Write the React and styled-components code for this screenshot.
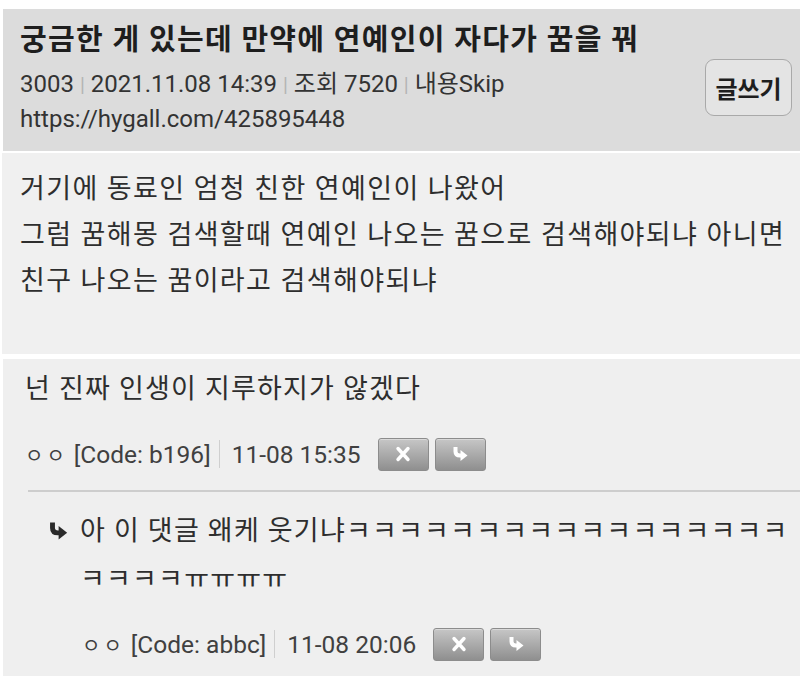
import styled, { createGlobalStyle } from "styled-components";

const Global = createGlobalStyle`
  body {
    margin: 0;
    background: #fff;
    font-family: "Roboto", "Noto Sans CJK KR", sans-serif;
  }
`;

function ReplyArrow({ color = "#fff", size = 18 }) {
  return (
    <svg width={size} height={size} viewBox="0 0 18 18">
      <path d="M4.5 2 L4.5 6.5 Q4.5 10.5 9 10.5 L10.5 10.5" stroke={color} strokeWidth="4" fill="none" />
      <path d="M9.5 5 L16.5 10.5 L9.5 16 Z" fill={color} />
    </svg>
  );
}

function CloseIcon() {
  return (
    <svg width="18" height="16" viewBox="0 0 18 16">
      <path d="M4 2.5 L14 13.5 M14 2.5 L4 13.5" stroke="#fff" strokeWidth="3.4" strokeLinecap="round" />
    </svg>
  );
}

function Actions() {
  return (
    <Btns>
      <IconBtn><CloseIcon /></IconBtn>
      <IconBtn><ReplyArrow /></IconBtn>
    </Btns>
  );
}

function Meta({ code, time }) {
  return (
    <MetaRow>
      <Nick>ㅇㅇ</Nick>
      <span>[Code: {code}]</span>
      <Bar />
      <span>{time}</span>
      <Actions />
    </MetaRow>
  );
}

export default function App() {
  return (
    <>
      <Global />
      <Page>
        <Header>
          <HeadInfo>
            <Title>궁금한 게 있는데 만약에 연예인이 자다가 꿈을 꿔</Title>
            <Info>
              3003 <Sep>|</Sep> 2021.11.08 14:39 <Sep>|</Sep> 조회 7520 <Sep>|</Sep> 내용Skip
            </Info>
            <Info>https://hygall.com/425895448</Info>
          </HeadInfo>
          <WriteBtn>글쓰기</WriteBtn>
        </Header>

        <Body>
          <p>거기에 동료인 엄청 친한 연예인이 나왔어</p>
          <p>그럼 꿈해몽 검색할때 연예인 나오는 꿈으로 검색해야되냐 아니면</p>
          <p>친구 나오는 꿈이라고 검색해야되냐</p>
        </Body>

        <Comments>
          <Comment>
            <CommentText>넌 진짜 인생이 지루하지가 않겠다</CommentText>
            <Meta code="b196" time="11-08 15:35" />
          </Comment>
          <Divider />
          <Reply>
            <ArrowCell>
              <ReplyArrow color="#2a2a2a" size={22} />
            </ArrowCell>
            <ReplyBody>
              <CommentText $lh={48} $ls={1.2}>
                아 이 댓글 왜케 웃기냐ㅋㅋㅋㅋㅋㅋㅋㅋㅋㅋㅋㅋㅋㅋㅋㅋㅋ
                <br />
                ㅋㅋㅋㅋㅠㅠㅠㅠ
              </CommentText>
              <ReplyMeta>
                <Meta code="abbc" time="11-08 20:06" />
              </ReplyMeta>
            </ReplyBody>
          </Reply>
        </Comments>
      </Page>
    </>
  );
}

const Page = styled.div`
  width: 800px;
  height: 699px;
  padding-top: 9px;
  box-sizing: border-box;
  overflow: hidden;
`;

const Header = styled.div`
  margin-left: 3px;
  background: #dcdcdc;
  display: flex;
  justify-content: space-between;
  align-items: flex-start;
  padding: 14px 8px 15px 17px;
`;

const HeadInfo = styled.div`
  display: flex;
  flex-direction: column;
`;

const Title = styled.h1`
  margin: 0 0 10px;
  font-size: 29px;
  letter-spacing: 1.3px;
  line-height: 34px;
  font-weight: 700;
  color: #1e1e1e;
  white-space: nowrap;
`;

const Info = styled.div`
  font-size: 24px;
  line-height: 34px;
  color: #333;
  white-space: nowrap;
`;

const Sep = styled.span`
  color: #b4b4b4;
  font-size: 20px;
`;

const WriteBtn = styled.button`
  margin-top: 36px;
  width: 87px;
  height: 57px;
  border: 1.5px solid #a9a9a9;
  border-radius: 9px;
  background: #e4e4e4;
  font-family: "Noto Sans CJK KR", sans-serif;
  font-size: 24px;
  font-weight: 700;
  color: #1e1e1e;
  padding: 0;
`;

const Body = styled.div`
  margin: 2px 0 0 2px;
  background: #f0f0f0;
  padding: 13px 0 50px 18px;
  font-size: 27px;
  letter-spacing: 1.4px;
  line-height: 46px;
  color: #2e2e2e;

  p {
    margin: 0;
    white-space: nowrap;
  }
`;

const Comments = styled.div`
  margin: 5px 0 0 3px;
  background: #efefef;
  height: 317px;
  box-sizing: border-box;
  padding-top: 10px;
`;

const Comment = styled.div`
  padding-left: 22px;
`;

const CommentText = styled.div`
  font-size: 27px;
  letter-spacing: ${(p) => p.$ls || 1.2}px;
  line-height: ${(p) => p.$lh || 40}px;
  color: #2e2e2e;
  white-space: nowrap;
`;

const MetaRow = styled.div`
  margin-top: 27px;
  display: flex;
  align-items: center;
  height: 36px;
  font-size: 24.5px;
  color: #404040;
`;

const Nick = styled.span`
  font-family: "Noto Sans CJK KR", sans-serif;
  font-size: 20px;
  letter-spacing: 3px;
  margin-right: 6px;
`;

const Bar = styled.span`
  width: 1px;
  height: 28px;
  background: #cfcfcf;
  margin: 0 12px 0 8px;
`;

const Btns = styled.div`
  display: flex;
  gap: 6px;
  margin-left: 17px;
`;

const IconBtn = styled.div`
  width: 51px;
  height: 33px;
  box-sizing: border-box;
  border: 1px solid #8c8c8c;
  border-radius: 3px;
  background: linear-gradient(#c6c6c6, #8f8f8f);
  box-shadow: inset 0 1px 0 rgba(255, 255, 255, 0.35);
  display: flex;
  align-items: center;
  justify-content: center;
`;

const Divider = styled.div`
  margin: 18px 0 0 25px;
  height: 2px;
  background: #cdcdcd;
`;

const Reply = styled.div`
  display: flex;
  margin-top: 15px;
  padding-left: 44px;
`;

const ArrowCell = styled.div`
  flex-shrink: 0;
  width: 33px;
  height: 48px;
  display: flex;
  align-items: center;
`;

const ReplyBody = styled.div`
  display: flex;
  flex-direction: column;
`;

const ReplyMeta = styled.div`
  padding-left: 2px;

  & > div {
    margin-top: 23px;
  }
`;
